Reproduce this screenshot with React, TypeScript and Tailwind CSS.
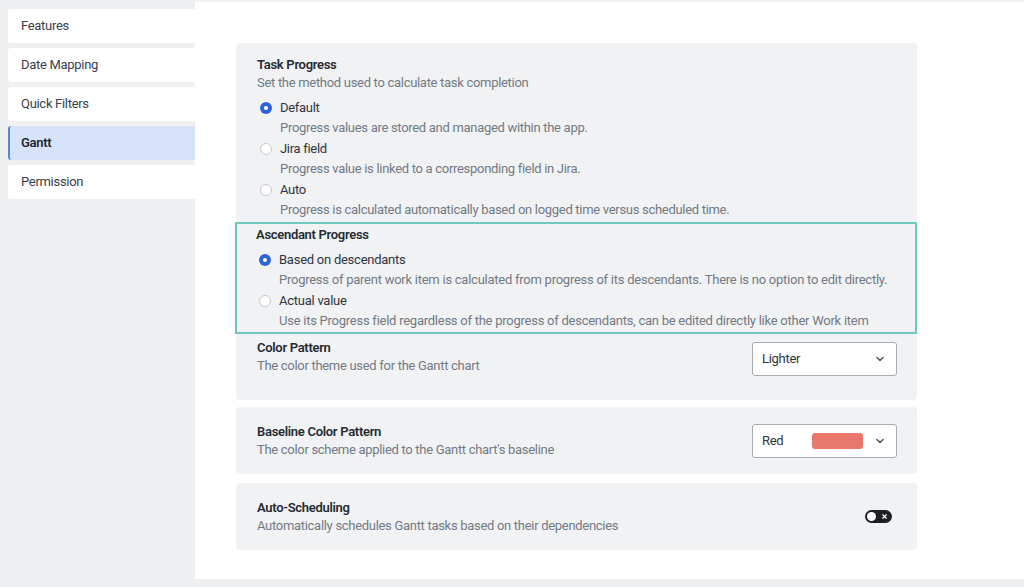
import { ChevronDown, X } from 'lucide-react';

const navItems = ['Features', 'Date Mapping', 'Quick Filters', 'Gantt', 'Permission'];

type Option = { label: string; desc: string; checked?: boolean };

const taskOptions: Option[] = [
    { label: 'Default', desc: 'Progress values are stored and managed within the app.', checked: true },
    { label: 'Jira field', desc: 'Progress value is linked to a corresponding field in Jira.' },
    { label: 'Auto', desc: 'Progress is calculated automatically based on logged time versus scheduled time.' },
];

const ascendantOptions: Option[] = [
    { label: 'Based on descendants', desc: 'Progress of parent work item is calculated from progress of its descendants. There is no option to edit directly.', checked: true },
    { label: 'Actual value', desc: 'Use its Progress field regardless of the progress of descendants, can be edited directly like other Work item' },
];

function Radio({ checked }: { checked?: boolean }) {
    return checked ? (
        <span className="flex h-3 w-3 items-center justify-center rounded-full bg-[#2d64d8]">
            <span className="h-1 w-1 rounded-full bg-white" />
        </span>
    ) : (
        <span className="h-3 w-3 rounded-full border border-[#c4c8ce] bg-white" />
    );
}

function Options({ options, tight }: { options: Option[]; tight?: boolean }) {
    return (
        <div className={`mt-[6px] flex flex-col gap-px ${tight ? 'tracking-[-0.25px]' : 'tracking-[-0.3px]'}`}>
            {options.map((o) => (
                <div key={o.label}>
                    <div className="flex h-5 items-center gap-2 pl-[3px]">
                        <Radio checked={o.checked} />
                        <span className="text-[13px] text-[#2f3540]">{o.label}</span>
                    </div>
                    <p className="whitespace-nowrap pl-[23px] text-[13px] leading-5 text-[#737a85]">{o.desc}</p>
                </div>
            ))}
        </div>
    );
}

function Heading({ title, desc }: { title: string; desc: string }) {
    return (
        <div className="tracking-[-0.3px]">
            <h3 className="text-[13px] font-semibold leading-[18px] text-[#252a33]">{title}</h3>
            <p className="text-[13px] leading-[18px] text-[#737a85]">{desc}</p>
        </div>
    );
}

function Select({ label, swatch }: { label: string; swatch?: boolean }) {
    return (
        <div className="flex h-[34px] w-[145px] items-center rounded-[3px] border border-[#a9adb3] bg-white pl-[9px] pr-[10px] tracking-[-0.3px]">
            <span className="text-[13px] text-[#2f3540]">{label}</span>
            {swatch && <span className="ml-auto mr-[11px] h-4 w-[51px] rounded-[3px] bg-[#e8776c]" />}
            <ChevronDown className={`h-3 w-3 text-[#4b5260] ${swatch ? '' : 'ml-auto'}`} strokeWidth={3} />
        </div>
    );
}

export default function App() {
    return (
        <div className="flex h-[587px] w-[1024px] bg-[#eef0f2] font-['Roboto',sans-serif]">
            <aside className="flex w-[195px] shrink-0 flex-col gap-[5px] pl-2 pt-[9px] tracking-[-0.3px]">
                {navItems.map((item) =>
                    item === 'Gantt' ? (
                        <div key={item} className="flex h-[34px] items-center rounded-l-[3px] border-l-2 border-[#5b86d6] bg-[#d6e3fa] pl-[11px] text-[13px] font-semibold text-[#1f2531]">
                            {item}
                        </div>
                    ) : (
                        <div key={item} className="flex h-[34px] items-center rounded-l-[3px] bg-white pl-[13px] text-[13px] text-[#3a404b]">
                            {item}
                        </div>
                    )
                )}
            </aside>

            <main className="mt-[2px] mb-2 flex-1 bg-white pl-[41px] pt-[41px]">
                <div className="flex w-[681px] flex-col gap-[7px]">
                    <section className="rounded-[4px] bg-[#f0f2f4] pb-6">
                        <div className="px-[21px] pt-[13px] pb-[2px]">
                            <Heading title="Task Progress" desc="Set the method used to calculate task completion" />
                            <Options options={taskOptions} />
                        </div>
                        <div className="-ml-px border-2 border-[#6fcabd] px-[19px] pt-[2px] pb-px">
                            <h3 className="text-[13px] font-semibold leading-[18px] tracking-[-0.3px] text-[#252a33]">Ascendant Progress</h3>
                            <Options options={ascendantOptions} tight />
                        </div>
                        <div className="flex items-start justify-between px-[21px] pr-[20px] pt-[5px]">
                            <Heading title="Color Pattern" desc="The color theme used for the Gantt chart" />
                            <div className="mt-[3px]">
                                <Select label="Lighter" />
                            </div>
                        </div>
                    </section>

                    <section className="flex h-[67px] items-center justify-between rounded-[4px] bg-[#f0f2f4] pl-[21px] pr-[20px]">
                        <Heading title="Baseline Color Pattern" desc="The color scheme applied to the Gantt chart's baseline" />
                        <Select label="Red" swatch />
                    </section>

                    <section className="mt-[2px] flex h-[67px] items-center justify-between rounded-[4px] bg-[#f0f2f4] pl-[21px] pr-[25px]">
                        <Heading title="Auto-Scheduling" desc="Automatically schedules Gantt tasks based on their dependencies" />
                        <div className="flex h-[13px] w-[27px] items-center justify-between rounded-full bg-[#1d1f23] px-[2px]">
                            <span className="h-[9px] w-[9px] rounded-full bg-white" />
                            <X className="mr-[2px] h-[7px] w-[7px] text-white" strokeWidth={4} />
                        </div>
                    </section>
                </div>
            </main>
        </div>
    );
}
